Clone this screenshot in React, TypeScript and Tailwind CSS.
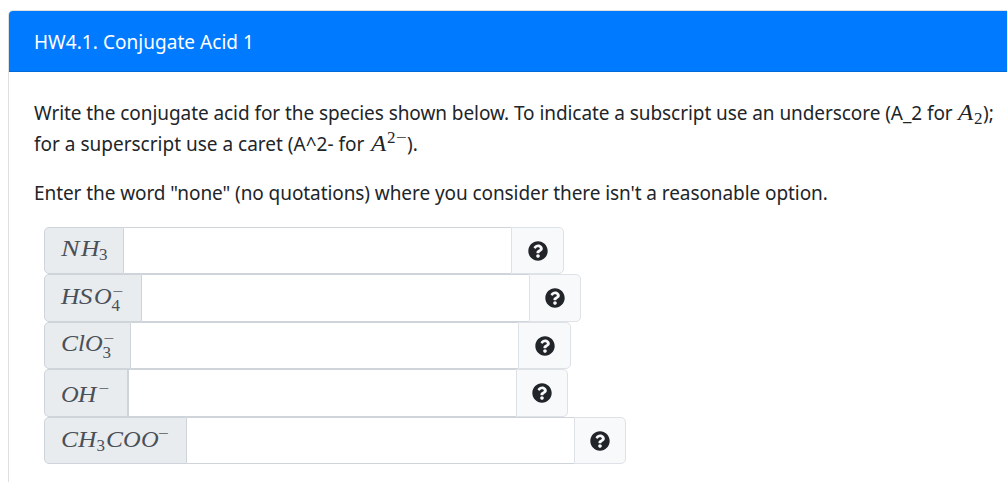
import type { ReactNode } from "react";
import { FaQuestionCircle } from "react-icons/fa";

// Per-letter advance and stretch, so the italics get the wide set of math type
const LETTERS: Record<string, string> = {
  A: "w-[16px] scale-x-[1.04]",
  C: "w-[17.5px] scale-x-[1.06]",
  H: "w-[18.5px] scale-x-[1.06]",
  N: "w-[20px] scale-x-[1.16]",
  O: "w-[17.5px] scale-x-[1.02]",
  S: "w-[15px] scale-x-[1.12]",
  l: "w-[7px] scale-x-[1.04]",
};

function Letters({ children }: { children: string }) {
  return children.split("").map((c, i) => (
    <span key={i} className={`inline-block origin-left italic ${LETTERS[c]}`}>
      {c}
    </span>
  ));
}

function Sub({ children }: { children: ReactNode }) {
  return <span className="inline-block w-[9px] align-[-4px] text-[17px] leading-none">{children}</span>;
}

function Minus() {
  return <span className="inline-block w-[11px] align-[7px] text-[19px] leading-none opacity-75">−</span>;
}

// Subscript with a minus stacked above it
function SubMinus({ children }: { children: ReactNode }) {
  return (
    <span className="inline-flex flex-col align-[6px]">
      <span className="h-[12px] pl-[1px] text-[19px] leading-[10px] opacity-75">−</span>
      <span className="h-[14px] text-[17px] leading-[14px]">{children}</span>
    </span>
  );
}

interface Species {
  name: string;
  row: string;
  prefix: string;
  addon: string;
  formula: ReactNode;
}

const SPECIES: Species[] = [
  {
    name: "ammonia",
    row: "h-[47px]",
    prefix: "w-[80px] pt-[4px]",
    addon: "w-[53px]",
    formula: <><Letters>NH</Letters><Sub>3</Sub></>,
  },
  {
    name: "hydrogen sulfate",
    row: "h-[48px]",
    prefix: "w-[98px] pt-[5px]",
    addon: "w-[52px]",
    formula: <><Letters>HSO</Letters><SubMinus>4</SubMinus></>,
  },
  {
    name: "chlorate",
    row: "h-[47px]",
    prefix: "w-[87px] pt-[4px]",
    addon: "w-[53px]",
    formula: <><Letters>ClO</Letters><SubMinus>3</SubMinus></>,
  },
  {
    name: "hydroxide",
    row: "h-[48px]",
    prefix: "w-[85px] border-r-2 pt-[8px]",
    addon: "w-[52px]",
    formula: <><Letters>OH</Letters><span className="ml-[2px]"><Minus /></span></>,
  },
  {
    name: "acetate",
    row: "h-[47px]",
    prefix: "w-[143px] pt-[5px]",
    addon: "w-[52px]",
    formula: <><Letters>CH</Letters><Sub>3</Sub><Letters>COO</Letters><Minus /></>,
  },
];

function AnswerRow({ name, row, prefix, addon, formula }: Species) {
  return (
    <div className={`flex ${row}`}>
      <div
        className={`shrink-0 rounded-l-[5px] border border-[#ced4da] bg-[#e9ecef] pl-[15.5px] font-['Liberation_Serif',serif] text-[24px] leading-[32px] whitespace-nowrap text-[#495057] ${prefix}`}
      >
        {formula}
      </div>
      <input
        type="text"
        aria-label={name}
        className="w-[387px] shrink-0 border-y border-[#ced4da] bg-white px-4 outline-none"
      />
      <button
        type="button"
        aria-label="Help"
        className={`flex shrink-0 items-center justify-center rounded-r-[5px] border border-[#dee2e6] bg-[#f8f9fa] text-[#212529] ${addon}`}
      >
        <FaQuestionCircle className="size-5" />
      </button>
    </div>
  );
}

export default function App() {
  return (
    <div className="h-[482px] w-full overflow-hidden bg-white pt-[10px] pl-[8px] font-['Noto_Sans',sans-serif] text-[19px] text-[#212529]">
      <div className="h-[600px] w-[1100px] rounded-[5px] border border-[#dfdfdf]">
        <div className="h-[61px] rounded-t-[4px] border-b border-[#0069d9] bg-[#007bff] pt-[16px] pl-[25px] leading-[30px] tracking-[0.04px] text-white">
          <span>HW4.1. Conjugate Acid 1</span>
        </div>
        <div className="pt-[26px] pl-[25px] leading-[30px] whitespace-nowrap">
          <p className="h-[30px]">
            <span className="inline-block w-[924px] tracking-[-0.07px]">
              Write the conjugate acid for the species shown below. To indicate a subscript use an underscore (A_2 for
            </span>
            <span className="font-['Liberation_Serif',serif] text-[24px] leading-none"><Letters>A</Letters><Sub>2</Sub></span>
            <span>);</span>
          </p>
          <p className="h-[30px]">
            <span className="inline-block w-[337px]">
              for a superscript use a caret (A^2- for
            </span>
            <span className="font-['Liberation_Serif',serif] text-[24px] leading-none">
              <Letters>A</Letters>
              <span className="inline-block w-[9px] align-[8px] text-[17px] leading-none">2</span>
              <Minus />
            </span>
            <span>).</span>
          </p>
          <p className="mt-[20px] h-[30px] tracking-[-0.08px]">
            Enter the word "none" (no quotations) where you consider there isn't a reasonable option.
          </p>
          <div className="mt-[19px] ml-[10px]">
            {SPECIES.map((s) => (
              <AnswerRow key={s.name} {...s} />
            ))}
          </div>
        </div>
      </div>
    </div>
  );
}
